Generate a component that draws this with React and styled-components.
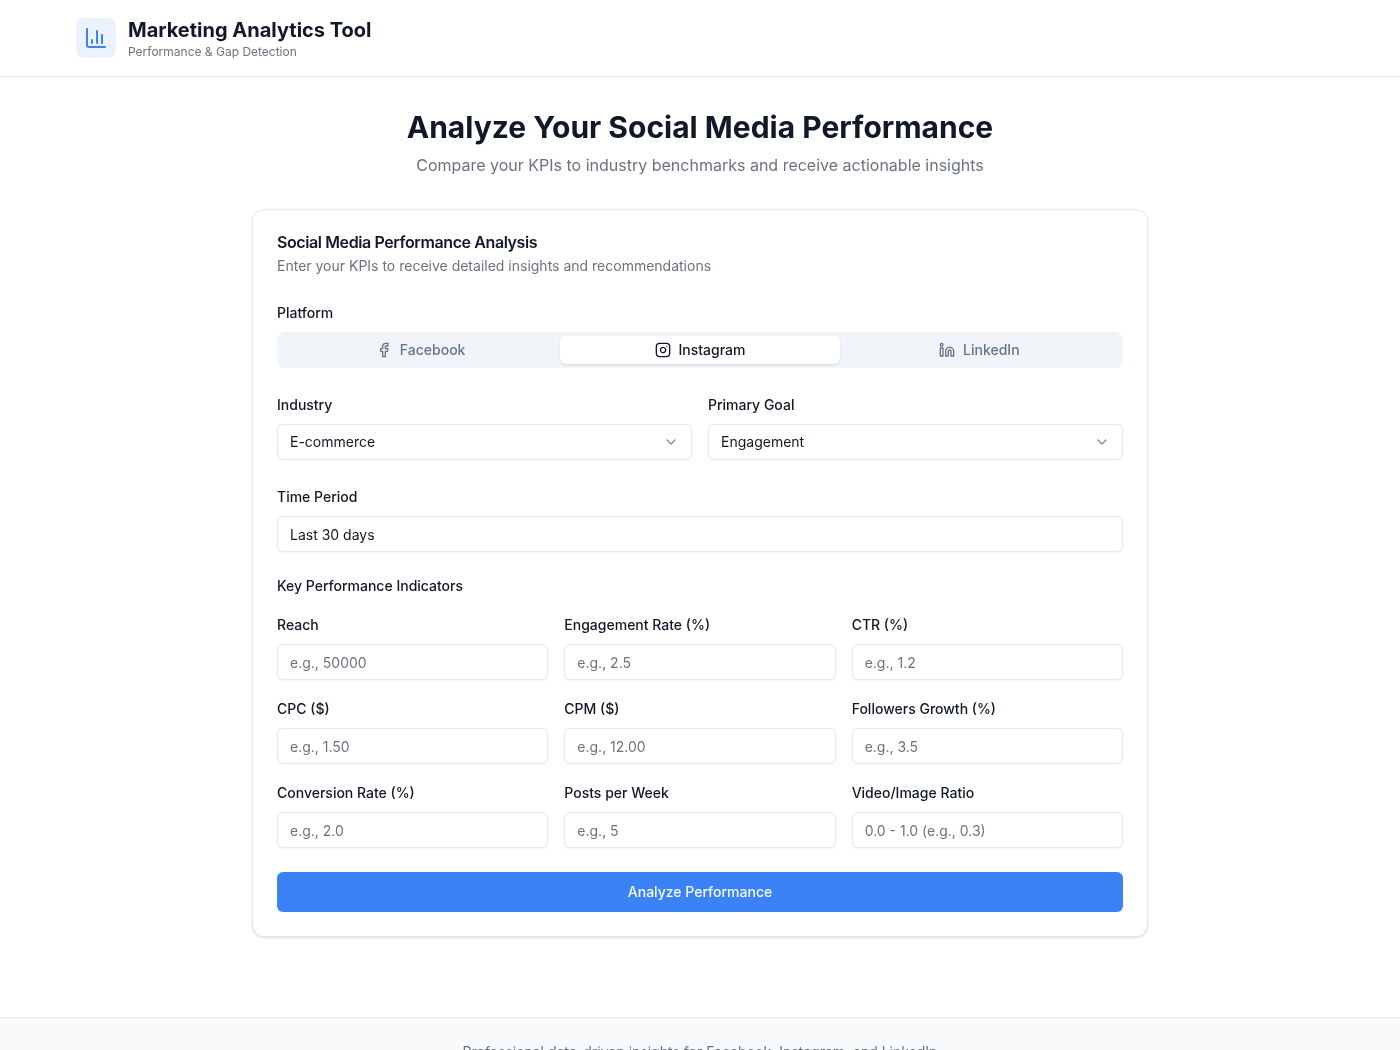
import styled, { createGlobalStyle } from "styled-components";
import { ChartColumn, ChevronDown, Facebook, Instagram, Linkedin } from "lucide-react";

const Global = createGlobalStyle`
  * { box-sizing: border-box; }
  html, body { margin: 0; padding: 0; background: #fff; }
  body {
    font-family: Inter, "Liberation Sans", sans-serif;
    color: #111827;
    font-size: 14px;
    line-height: 20px;
    -webkit-font-smoothing: antialiased;
  }
  button, input { font-family: inherit; }
`;

const Page = styled.div`
  min-height: 100vh;
  display: flex;
  flex-direction: column;
  background: #fff;
  will-change: transform;
`;

const Header = styled.header`
  height: 77px;
  border-bottom: 1px solid #e5e7eb;
`;

const HeaderInner = styled.div`
  max-width: 1280px;
  margin: 0 auto;
  padding: 16px;
  display: flex;
  gap: 12px;
  align-items: center;
`;

const LogoBox = styled.div`
  width: 40px;
  height: 40px;
  border-radius: 8px;
  background: #ebf2fe;
  color: #3b82f6;
  display: flex;
  align-items: center;
  justify-content: center;
`;

const AppName = styled.h1`
  margin: 0;
  font-size: 20px;
  line-height: 28px;
  font-weight: 700;
  color: #111827;
`;

const AppSub = styled.p`
  margin: 0;
  font-size: 12px;
  line-height: 16px;
  color: #6b7280;
`;

const Main = styled.main`
  width: 896px;
  margin: 0 auto;
  padding-top: 32px;
  padding-bottom: 80px;
`;

const Hero = styled.div`
  text-align: center;
  margin-bottom: 32px;
`;

const HeroTitle = styled.h2`
  margin: 0 0 8px;
  font-size: 30px;
  line-height: 36px;
  font-weight: 700;
  color: #111827;
`;

const HeroSub = styled.p`
  margin: 0;
  font-size: 16px;
  line-height: 24px;
  color: #6b7280;
`;

const Card = styled.section`
  background: #fff;
  border: 1px solid #e5e7eb;
  border-radius: 12px;
  box-shadow: 0 1px 3px rgba(0, 0, 0, 0.1), 0 1px 2px -1px rgba(0, 0, 0, 0.1);
  padding: 24px;
  display: flex;
  flex-direction: column;
`;

const CardTitle = styled.h3`
  margin: 0;
  font-size: 16px;
  line-height: 16px;
  font-weight: 600;
  color: #111827;
  letter-spacing: -0.4px;
`;

const CardSub = styled.p`
  margin: 6px 0 30px;
  font-size: 14px;
  line-height: 20px;
  color: #6b7280;
`;

const Field = styled.div`
  display: flex;
  flex-direction: column;
  gap: 12px;
  min-width: 0;
`;

const Label = styled.label`
  font-size: 14px;
  line-height: 14px;
  font-weight: 500;
  color: #111827;
`;

const Tabs = styled.div`
  height: 36px;
  padding: 4px;
  border-radius: 8px;
  background: #f1f5f9;
  display: grid;
  grid-template-columns: repeat(3, 1fr);
`;

const Tab = styled.button`
  border: 0;
  border-radius: 6px;
  background: ${(p) => (p.$active ? "#fff" : "transparent")};
  color: ${(p) => (p.$active ? "#111827" : "#64748b")};
  box-shadow: ${(p) => (p.$active ? "0 1px 3px rgba(0,0,0,.1), 0 1px 2px -1px rgba(0,0,0,.1)" : "none")};
  font-size: 14px;
  line-height: 20px;
  font-weight: 500;
  display: flex;
  align-items: center;
  justify-content: center;
  gap: 8px;
  padding: 0;
`;

const TwoCols = styled.div`
  display: grid;
  grid-template-columns: 1fr 1fr;
  gap: 16px;
  margin-top: 30px;
`;

const Select = styled.button`
  height: 36px;
  width: 100%;
  padding: 0 12px;
  background: #fff;
  border: 1px solid #e5e7eb;
  border-radius: 6px;
  box-shadow: 0 1px 2px rgba(0, 0, 0, 0.05);
  display: flex;
  align-items: center;
  justify-content: space-between;
  font-size: 14px;
  line-height: 20px;
  color: #111827;
  svg { color: #111827; opacity: 0.5; }
`;

const Input = styled.input`
  height: 36px;
  width: 100%;
  padding: 0 12px;
  background: #fff;
  border: 1px solid #e5e7eb;
  border-radius: 6px;
  box-shadow: 0 1px 2px rgba(0, 0, 0, 0.05);
  font-size: 14px;
  color: #111827;
  outline: none;
  &::placeholder { color: #6b7280; opacity: 1; }
`;

const TimeField = styled(Field)`
  margin-top: 30px;
`;

const SectionTitle = styled.h4`
  margin: 27px 0 0;
  font-size: 14px;
  line-height: 14px;
  font-weight: 500;
  color: #111827;
`;

const KpiGrid = styled.div`
  display: grid;
  grid-template-columns: repeat(3, 1fr);
  gap: 22px 16px;
  margin-top: 25px;
`;

const Submit = styled.button`
  margin-top: 24px;
  height: 40px;
  border: 0;
  border-radius: 6px;
  background: #3b82f6;
  color: #f8fafc;
  font-size: 14px;
  line-height: 20px;
  font-weight: 500;
`;

const Footer = styled.footer`
  margin-top: auto;
  border-top: 1px solid #e5e7eb;
  background: #f9fafb;
  padding: 24px 16px;
  text-align: center;
  font-size: 14px;
  line-height: 20px;
  color: #6b7280;
`;

const kpis = [
  ["Reach", "e.g., 50000"],
  ["Engagement Rate (%)", "e.g., 2.5"],
  ["CTR (%)", "e.g., 1.2"],
  ["CPC ($)", "e.g., 1.50"],
  ["CPM ($)", "e.g., 12.00"],
  ["Followers Growth (%)", "e.g., 3.5"],
  ["Conversion Rate (%)", "e.g., 2.0"],
  ["Posts per Week", "e.g., 5"],
  ["Video/Image Ratio", "0.0 - 1.0 (e.g., 0.3)"],
];

export default function App() {
  return (
    <Page>
      <Global />
      <Header>
        <HeaderInner>
          <LogoBox>
            <ChartColumn size={24} strokeWidth={2} />
          </LogoBox>
          <div>
            <AppName>Marketing Analytics Tool</AppName>
            <AppSub>Performance &amp; Gap Detection</AppSub>
          </div>
        </HeaderInner>
      </Header>
      <Main>
        <Hero>
          <HeroTitle>Analyze Your Social Media Performance</HeroTitle>
          <HeroSub>Compare your KPIs to industry benchmarks and receive actionable insights</HeroSub>
        </Hero>
        <Card>
          <CardTitle>Social Media Performance Analysis</CardTitle>
          <CardSub>Enter your KPIs to receive detailed insights and recommendations</CardSub>
          <Field>
            <Label>Platform</Label>
            <Tabs>
              <Tab><Facebook size={16} />Facebook</Tab>
              <Tab $active><Instagram size={16} />Instagram</Tab>
              <Tab><Linkedin size={16} />LinkedIn</Tab>
            </Tabs>
          </Field>
          <TwoCols>
            <Field>
              <Label>Industry</Label>
              <Select>E-commerce<ChevronDown size={16} /></Select>
            </Field>
            <Field>
              <Label>Primary Goal</Label>
              <Select>Engagement<ChevronDown size={16} /></Select>
            </Field>
          </TwoCols>
          <TimeField>
            <Label>Time Period</Label>
            <Input defaultValue="Last 30 days" />
          </TimeField>
          <SectionTitle>Key Performance Indicators</SectionTitle>
          <KpiGrid>
            {kpis.map(([label, hint]) => (
              <Field key={label}>
                <Label>{label}</Label>
                <Input placeholder={hint} />
              </Field>
            ))}
          </KpiGrid>
          <Submit>Analyze Performance</Submit>
        </Card>
      </Main>
      <Footer>Professional data-driven insights for Facebook, Instagram, and LinkedIn</Footer>
    </Page>
  );
}
